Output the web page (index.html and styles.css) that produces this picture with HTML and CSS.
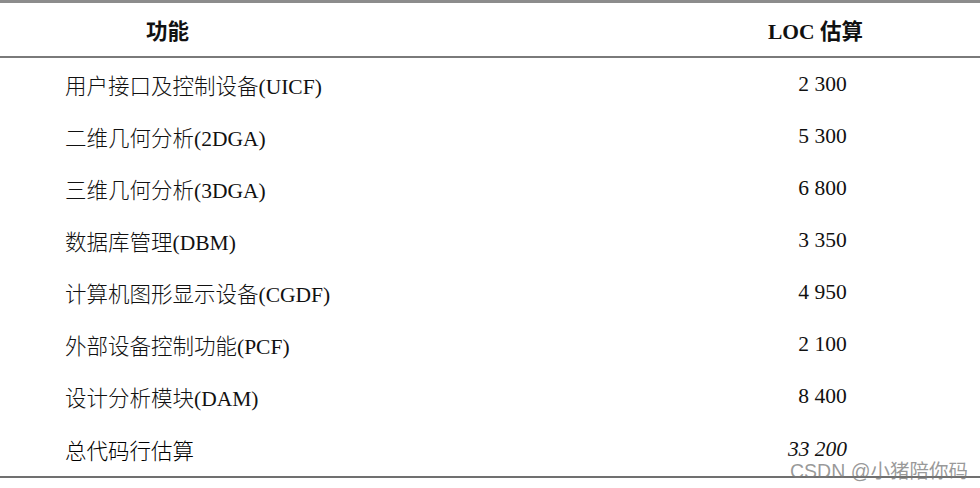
FILE: index.html
```html
<!DOCTYPE html>
<html lang="zh">
<head>
<meta charset="utf-8">
<link rel="stylesheet" href="styles.css">
</head>
<body>
<div class="sheet">
  <div class="row head">
    <div class="c1">功能</div>
    <div class="c2">LOC 估算</div>
  </div>
  <div class="row"><div class="c1">用户接口及控制设备(UICF)</div><div class="c2">2 300</div></div>
  <div class="row"><div class="c1">二维几何分析(2DGA)</div><div class="c2">5 300</div></div>
  <div class="row"><div class="c1">三维几何分析(3DGA)</div><div class="c2">6 800</div></div>
  <div class="row"><div class="c1">数据库管理(DBM)</div><div class="c2">3 350</div></div>
  <div class="row"><div class="c1">计算机图形显示设备(CGDF)</div><div class="c2">4 950</div></div>
  <div class="row"><div class="c1">外部设备控制功能(PCF)</div><div class="c2">2 100</div></div>
  <div class="row"><div class="c1">设计分析模块(DAM)</div><div class="c2">8 400</div></div>
  <div class="row total"><div class="c1">总代码行估算</div><div class="c2">33 200</div></div>
  <div class="mark">CSDN @小猪陪你码</div>
</div>
</body>
</html>
```
FILE: styles.css
```css
html, body {
  margin: 0;
  padding: 0;
  background: #fff;
}
.sheet {
  position: relative;
  width: 980px;
  height: 488px;
  border-top: 3px solid #8c8c8c;
  box-sizing: border-box;
  font-family: "Liberation Serif", "Noto Sans CJK SC", serif;
  color: #111;
}
.row {
  display: grid;
  grid-template-columns: 665px 315px;
  height: 52px;
  align-items: center;
  font-size: 21.5px;
  font-weight: 300;
}
.row .c1 {
  padding-left: 65px;
}
.row .c2 {
  text-align: center;
}
.head {
  height: 53px;
  border-bottom: 2px solid #7a7a7a;
  font-weight: bold;
  font-size: 21.5px;
}
.head .c1 {
  padding-left: 146px;
}
.head .c2 {
  padding-right: 14px;
}
.total {
  height: 54px;
  border-bottom: 2px solid #707070;
}
.total .c1 {
  color: #000;
}
.total .c2 {
  font-style: italic;
  padding-right: 10px;
}
.mark {
  position: absolute;
  left: 790px;
  top: 452px;
  font-family: "Liberation Sans", "Noto Sans CJK SC", sans-serif;
  font-size: 19.5px;
  font-weight: normal;
  color: rgba(120, 120, 120, 0.75);
  white-space: nowrap;
}
```
